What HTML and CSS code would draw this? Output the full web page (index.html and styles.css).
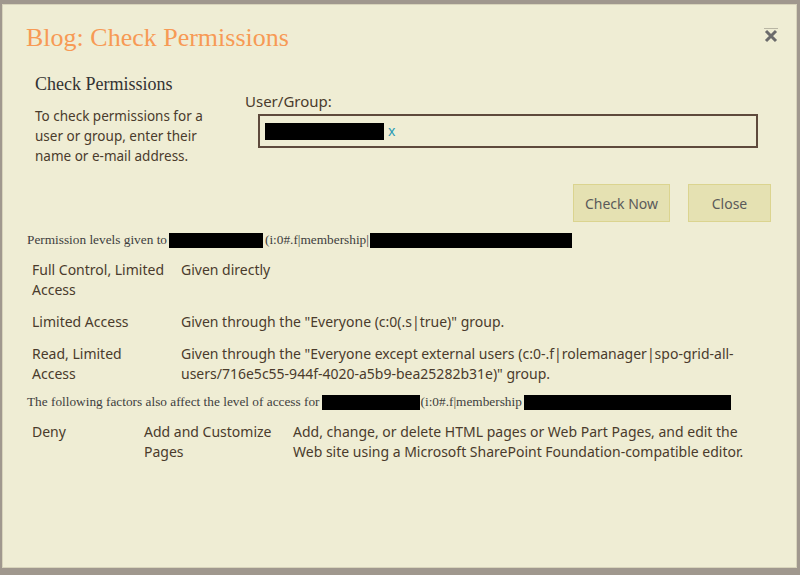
FILE: index.html
```html
<!DOCTYPE html>
<html lang="en">
<head>
  <meta charset="UTF-8">
  <title>Blog: Check Permissions</title>
  <link rel="stylesheet" href="styles.css">
</head>
<body>
  <div class="dialog">
    <div class="title-bar">
      <h1>Blog: Check Permissions</h1>
      <button class="close-x" title="Close">
        <svg width="14" height="14" viewBox="0 0 14 14"><path d="M2 2 L12 12 M12 2 L2 12" stroke="#6b6b6b" stroke-width="3"/></svg>
      </button>
    </div>

    <div class="check-form">
      <div class="intro">
        <h2>Check Permissions</h2>
        <p>To check permissions for a user or group, enter their name or e-mail address.</p>
      </div>
      <div class="picker">
        <label>User/Group:</label>
        <div class="picker-box">
          <span class="redact user-chip"></span><span class="remove">x</span>
        </div>
      </div>
    </div>

    <div class="actions">
      <button class="btn">Check Now</button>
      <button class="btn btn-close">Close</button>
    </div>

    <div class="section-head">Permission levels given to<span class="redact r1"></span>(i:0#.f|membership|<span class="redact r2"></span></div>
    <div class="perm-table">
      <div>Full Control, Limited Access</div>
      <div>Given directly</div>
      <div>Limited Access</div>
      <div>Given through the "Everyone (c:0(.s|true)" group.</div>
      <div>Read, Limited Access</div>
      <div>Given through the "Everyone except external users (c:0-.f|rolemanager|spo-grid-all-users/716e5c55-944f-4020-a5b9-bea25282b31e)" group.</div>
    </div>

    <div class="section-head">The following factors also affect the level of access for<span class="redact r3"></span>(i:0#.f|membership<span class="redact r4"></span></div>
    <div class="deny-table">
      <div>Deny</div>
      <div>Add and Customize Pages</div>
      <div>Add, change, or delete HTML pages or Web Part Pages, and edit the Web site using a Microsoft SharePoint Foundation-compatible editor.</div>
    </div>
  </div>
</body>
</html>
```

FILE: styles.css
```css
html, body {
  margin: 0;
  height: 100%;
}
body {
  background: #a0988e;
  font-family: "Noto Sans", Arial, sans-serif;
  font-size: 14px;
  color: #4a3b2c;
  overflow: hidden;
}
.dialog {
  box-sizing: border-box;
  width: 795px;
  height: 564px;
  margin: 4px 0 0 2px;
  background: #efedd4;
  border: 1px solid #d8d4bb;
}
.title-bar {
  display: flex;
  justify-content: space-between;
  padding: 18px 18px 0 23px;
}
h1 {
  margin: 0;
  font-family: "Liberation Serif", "DejaVu Serif", serif;
  font-weight: normal;
  font-size: 26px;
  color: #f79a55;
}
.close-x {
  background: none;
  border: none;
  padding: 0;
  margin-top: 5px;
  height: 14px;
  border-top: 1px solid #b9b6a4;
  cursor: pointer;
}
.check-form {
  display: flex;
  padding: 21px 0 0 32px;
}
.intro {
  width: 190px;
}
h2 {
  margin: 0 0 11px 0;
  font-family: "Liberation Serif", "DejaVu Serif", serif;
  font-weight: normal;
  font-size: 18px;
  color: #333;
}
.intro p {
  margin: 0;
  line-height: 20px;
  font-size: 13.5px;
}
.picker {
  margin: 17px 0 0 20px;
}
.picker label {
  display: block;
  font-size: 15px;
  margin-bottom: 3px;
}
.picker-box {
  box-sizing: border-box;
  width: 500px;
  height: 34px;
  margin-left: 13px;
  border: 2px solid #5e4a3c;
  padding: 0 0 0 5px;
  display: flex;
  align-items: center;
}
.user-chip {
  width: 119px;
  height: 17px;
}
.remove {
  color: #2a9bb5;
  margin: -2px 0 0 4px;
}
.redact {
  display: inline-block;
  background: #000;
}
.actions {
  display: flex;
  justify-content: flex-end;
  gap: 18px;
  padding: 18px 25px 0 0;
}
.btn {
  box-sizing: border-box;
  height: 38px;
  min-width: 97px;
  background: #e5e1b2;
  border: 1px solid #dbd48f;
  font-family: "Noto Sans", Arial, sans-serif;
  font-size: 14px;
  color: #5a5a5a;
}
.btn-close {
  min-width: 83px;
}
.section-head {
  font-family: "Liberation Serif", "DejaVu Serif", serif;
  font-size: 13.3px;
  color: #3e3e3e;
  padding-left: 24px;
  margin-top: 10px;
  display: flex;
  align-items: center;
}
.r1 { width: 94px; height: 15px; margin: 0 2px 0 2px; }
.r2 { width: 202px; height: 15px; margin-left: 1px; }
.r3 { width: 98px; height: 15px; margin: 0 1px 0 2px; }
.r4 { width: 207px; height: 15px; margin-left: 2px; }
.perm-table {
  display: grid;
  grid-template-columns: 149px 580px;
  row-gap: 12px;
  padding: 12px 0 0 29px;
  line-height: 20px;
}
.perm-table div:nth-child(odd) {
  padding-right: 16px;
}
.deny-table {
  display: grid;
  grid-template-columns: 112px 149px 470px;
  padding: 12px 0 0 29px;
  line-height: 20px;
}
.deny-table div {
  padding-right: 10px;
}
```
